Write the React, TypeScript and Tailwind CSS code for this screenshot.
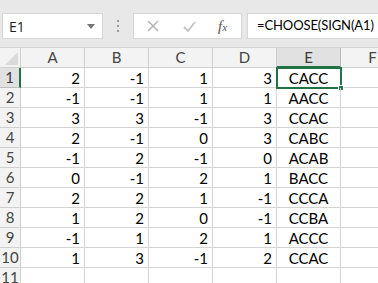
import React from "react";

// ─── Sheet data ──────────────────────────────────────────────────────────────

const COLS = ["A", "B", "C", "D", "E", "F"];

const ROWS: [number, number, number, number, string][] = [
    [2, -1, 1, 3, "CACC"],
    [-1, -1, 1, 1, "AACC"],
    [3, 3, -1, 3, "CCAC"],
    [2, -1, 0, 3, "CABC"],
    [-1, 2, -1, 0, "ACAB"],
    [0, -1, 2, 1, "BACC"],
    [2, 2, 1, -1, "CCCA"],
    [1, 2, 0, -1, "CCBA"],
    [-1, 1, 2, 1, "ACCC"],
    [1, 3, -1, 2, "CCAC"],
];

const cell = "border-r border-b border-[#d4d4d4] h-[20px] leading-[20px] text-[15px] text-black";

function Toolbar() {
    return (
        <div className="flex h-[26px]">
            {/* name box */}
            <div className="ml-[2px] w-[101px] bg-white border border-[#d6d6d6] flex items-center pl-[6px] pr-[7px]">
                <span className="flex-1 text-[14px] text-[#222] font-['Open_Sans',sans-serif]">E1</span>
                <svg width="8" height="5" viewBox="0 0 8 5">
                    <path d="M0 0h8L4 5z" fill="#777" />
                </svg>
            </div>
            {/* grip */}
            <div className="w-[30px] flex flex-col items-center justify-center gap-[3px]">
                <span className="w-[2px] h-[2px] bg-[#9a9a9a]" />
                <span className="w-[2px] h-[2px] bg-[#9a9a9a]" />
                <span className="w-[2px] h-[2px] bg-[#9a9a9a]" />
            </div>
            {/* cancel / enter / fx */}
            <div className="w-[109px] bg-white border border-[#d6d6d6] flex items-center">
                <svg className="ml-[13px]" width="12" height="12" viewBox="0 0 12 12">
                    <path d="M1 1l10 10M11 1L1 11" stroke="#b3b3b3" strokeWidth="1.5" />
                </svg>
                <svg className="ml-[24px]" width="13" height="11" viewBox="0 0 13 11">
                    <path d="M1 6l4 4 7-9" stroke="#c4c4c4" strokeWidth="1.8" fill="none" />
                </svg>
                <span className="ml-[22px] text-[15px] italic text-[#555] font-['Liberation_Serif',serif] leading-none">
                    f<span className="text-[11px]">x</span>
                </span>
            </div>
            {/* formula box */}
            <div className="ml-[5px] flex-1 bg-white border border-[#d6d6d6] border-r-0 flex items-center pl-[9px] overflow-hidden whitespace-nowrap">
                <span className="text-[13px] tracking-[-0.1px] text-black">=CHOOSE(SIGN(A1)</span>
            </div>
        </div>
    );
}

export default function App() {
    return (
        <div className="w-[378px] h-[283px] overflow-hidden bg-[#e8e8e8] font-['Lato',sans-serif]">
            <div className="h-[13px]" />
            <Toolbar />
            <div className="h-[8px]" />

            <div className="grid grid-cols-[21px_64px_64px_64px_64px_64px_64px] w-[405px] bg-white border-t border-[#d4d4d4]">
                {/* corner */}
                <div className="h-[20px] bg-[#f3f3f3] border-r border-b border-[#cfcfcf] flex items-end justify-end p-[2px]">
                    <svg width="13" height="13" viewBox="0 0 13 13">
                        <path d="M13 0V13H0z" fill="#dadada" />
                    </svg>
                </div>
                {COLS.map(c => (
                    <div
                        key={c}
                        className={`h-[20px] border-r border-b flex items-center justify-center text-[15px] ${
                            c === "E"
                                ? "bg-[#e1e1e1] border-b-2 border-b-[#217346] border-r-[#bdbdbd] text-[#3a3a3a]"
                                : "bg-[#f3f3f3] border-[#cfcfcf] text-[#444]"
                        }`}
                    >
                        {c}
                    </div>
                ))}

                {ROWS.map((r, i) => (
                    <React.Fragment key={i}>
                        <div
                            className={`h-[20px] border-b flex items-center justify-center text-[15px] ${
                                i === 0
                                    ? "bg-[#e1e1e1] border-r-2 border-r-[#217346] border-b-[#bdbdbd] text-[#3a3a3a]"
                                    : "bg-[#f3f3f3] border-r border-[#cfcfcf] text-[#444]"
                            }`}
                        >
                            {i + 1}
                        </div>
                        {r.slice(0, 4).map((v, j) => (
                            <div key={j} className={`${cell} text-right pr-[4px]`}>{v}</div>
                        ))}
                        <div className={`${cell} text-center relative`}>
                            {r[4]}
                            {i === 0 && (
                                <>
                                    <div className="absolute -left-[1px] -top-[1px] w-[66px] h-[22px] border-2 border-[#217346]" />
                                    <div className="absolute -right-[4px] -bottom-[4px] w-[6px] h-[6px] bg-[#217346] border border-white" />
                                </>
                            )}
                        </div>
                        <div className={cell} />
                    </React.Fragment>
                ))}

                <div className="h-[20px] bg-[#f3f3f3] border-r border-b border-[#cfcfcf] flex items-center justify-center text-[15px] text-[#444]">11</div>
                {COLS.map(c => (
                    <div key={c} className={cell} />
                ))}
            </div>
        </div>
    );
}
